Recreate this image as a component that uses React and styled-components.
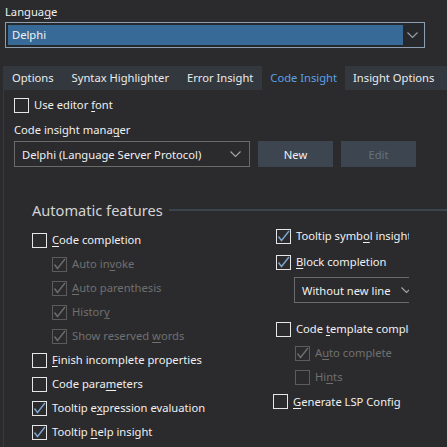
import React from "react";
import styled, { createGlobalStyle } from "styled-components";

const Global = createGlobalStyle`
  html, body { margin: 0; padding: 0; background: #2b2b2e; }
  * { box-sizing: border-box; }
`;

const Root = styled.div`
  width: 447px;
  height: 447px;
  overflow: hidden;
  background: #2b2b2e;
  color: #f0f0f0;
  font-family: "Noto Sans", "Open Sans", sans-serif;
  font-size: 11.2px;
  display: flex;
  flex-direction: column;
`;

const Top = styled.div`
  padding: 4px 22px 0 5px;
  display: flex;
  flex-direction: column;
`;

const Label = styled.div`
  color: ${(p) => (p.$dim ? "#707070" : "#f0f0f0")};
  line-height: 16px;
  padding-left: ${(p) => p.$indent || 0}px;
  margin-top: ${(p) => p.$mt || 0}px;
  white-space: nowrap;
`;

const U = styled.span`
  text-decoration: underline;
  text-underline-offset: 2px;
`;

const LangCombo = styled.div`
  margin-top: 2px;
  height: 26px;
  border: 1px solid #8c9fb2;
  padding: 2px;
  display: flex;
  background: #26282b;
`;

const LangValue = styled.div`
  flex: 1;
  background: #386a97;
  color: #f2f2f2;
  padding-left: 4px;
  line-height: 20px;
`;

const Arrow = styled.div`
  width: 19px;
  display: flex;
  align-items: center;
  justify-content: center;
`;

const TabStrip = styled.div`
  margin-top: 18px;
  margin-left: 3px;
  height: 24px;
  background: #33383e;
  display: flex;
`;

const Tab = styled.div`
  padding: 0 ${(p) => p.$pad || 8}px;
  line-height: 24px;
  white-space: nowrap;
  background: ${(p) => (p.$active ? "#2b2b2e" : "transparent")};
  color: ${(p) => (p.$active ? "#5aa2e6" : "#ececec")};
`;

const Page = styled.div`
  flex: 1;
  margin-left: 3px;
  border-left: 1px solid #36393d;
  display: flex;
  flex-direction: column;
  padding: 4px 0 0 10px;
`;

const Row = styled.div`
  display: flex;
  align-items: center;
  gap: ${(p) => p.$gap || 5}px;
  height: ${(p) => p.$h || 24}px;
  margin-left: ${(p) => p.$ml || 0}px;
  white-space: nowrap;
  flex: none;
`;

const BoxSvg = styled.svg`
  flex: none;
  display: block;
`;

function Check({ checked, dim }) {
  const border = dim ? "#5c5c5c" : "#e6e6e6";
  const tick = dim ? "#6c6c6c" : "#7ea6cc";
  return (
    <BoxSvg width="15" height="15" viewBox="0 0 15 15">
      <rect x="0.5" y="0.5" width="14" height="14" fill="none" stroke={border} strokeWidth="1" />
      {checked && (
        <polyline points="2.5,7.5 5.5,11.5 13,2" fill="none" stroke={tick} strokeWidth="1.4" />
      )}
    </BoxSvg>
  );
}

const Chevron = ({ color = "#a8a8a8", w = 11 }) => (
  <svg width={w} height="7" viewBox="0 0 11 7">
    <polyline points="0.5,0.5 5.5,5.5 10.5,0.5" fill="none" stroke={color} strokeWidth="1.1" />
  </svg>
);

const ManagerRow = styled.div`
  display: flex;
  gap: 8px;
  margin-top: 3px;
  height: 26px;
`;

const Combo = styled.div`
  width: ${(p) => p.$w}px;
  height: 26px;
  border: 1px solid #6a6a6a;
  ${(p) => (p.$clip ? "border-right: none;" : "")}
  display: flex;
  align-items: center;
  justify-content: space-between;
  padding: 0 ${(p) => (p.$clip ? 2 : 8)}px 0 7px;
  white-space: nowrap;
  flex: none;
`;

const Button = styled.div`
  width: 75px;
  height: 26px;
  background: #3c4550;
  display: flex;
  align-items: center;
  justify-content: center;
  color: ${(p) => (p.$disabled ? "#67727c" : "#f0f0f0")};
`;

const GroupHeader = styled.div`
  margin-top: 34px;
  margin-left: 18px;
  display: flex;
  align-items: center;
  gap: 6px;
  font-size: 14.6px;
  color: #d4d4d4;
  height: 18px;
`;

const GroupLine = styled.div`
  flex: 1;
  height: 2px;
  background: #3b444d;
`;

const Columns = styled.div`
  display: flex;
  margin-top: 9px;
  margin-left: 18px;
  align-items: flex-start;
`;

const Col = styled.div`
  display: flex;
  flex-direction: column;
  width: ${(p) => p.$w}px;
  overflow: hidden;
  flex: none;
  margin-top: ${(p) => p.$mt || 0}px;
  padding-left: ${(p) => p.$pl || 0}px;
`;

function Item({ checked, dim, indent, children, h }) {
  return (
    <Row $ml={indent} $h={h}>
      <Check checked={checked} dim={dim} />
      <Label $dim={dim}>{children}</Label>
    </Row>
  );
}

export default function App() {
  return (
    <Root>
      <Global />
      <Top>
        <Label>
          Langua<U>g</U>e
        </Label>
        <LangCombo>
          <LangValue>Delphi</LangValue>
          <Arrow>
            <Chevron color="#9aa4ae" />
          </Arrow>
        </LangCombo>
      </Top>
      <TabStrip>
        <Tab $pad={9}>Options</Tab>
        <Tab $pad={9}>Syntax Highlighter</Tab>
        <Tab $pad={9}>Error Insight</Tab>
        <Tab $active $pad={8}>Code Insight</Tab>
        <Tab $pad={8}>Insight Options</Tab>
      </TabStrip>
      <Page>
        <Item h={22}>
          Use editor <U>f</U>ont
        </Item>
        <Label $mt={6}>
          Code insight mana<U>g</U>er
        </Label>
        <ManagerRow>
          <Combo $w={236}>
            <span>Delphi (Language Server Protocol)</span>
            <Chevron />
          </Combo>
          <Button>New</Button>
          <Button $disabled>Edit</Button>
        </ManagerRow>
        <GroupHeader>
          <span>Automatic features</span>
          <GroupLine />
        </GroupHeader>
        <Columns>
          <Col $w={241}>
            <Item>
              <U>C</U>ode completion
            </Item>
            <Item checked dim indent={20}>
              Auto in<U>v</U>oke
            </Item>
            <Item checked dim indent={20}>
              <U>A</U>uto parenthesis
            </Item>
            <Item checked dim indent={20}>
              Histor<U>y</U>
            </Item>
            <Item checked dim indent={20}>
              Show reserved <U>w</U>ords
            </Item>
            <Item>
              <U>F</U>inish incomplete properties
            </Item>
            <Item>
              Code para<U>m</U>eters
            </Item>
            <Item checked>
              Tooltip e<U>x</U>pression evaluation
            </Item>
            <Item checked>
              Tooltip <U>h</U>elp insight
            </Item>
          </Col>
          <Col $w={136} $mt={-5} $pl={3}>
            <Item checked h={26}>
              Tooltip symb<U>o</U>l insight
            </Item>
            <Item checked h={26}>
              <U>B</U>lock completion
            </Item>
            <Row $ml={18} $h={30}>
              <Combo $w={120} $clip>
                <span>Without new line</span>
                <Chevron />
              </Combo>
            </Row>
            <Row $h={12} />
            <Item h={24}>
              Code <U>t</U>emplate completion
            </Item>
            <Item checked dim indent={19} h={24}>
              A<U>u</U>to complete
            </Item>
            <Item dim indent={19} h={24}>
              Hi<U>n</U>ts
            </Item>
            <Item indent={-3} h={25}>
              <U>G</U>enerate LSP Config
            </Item>
          </Col>
        </Columns>
      </Page>
    </Root>
  );
}
